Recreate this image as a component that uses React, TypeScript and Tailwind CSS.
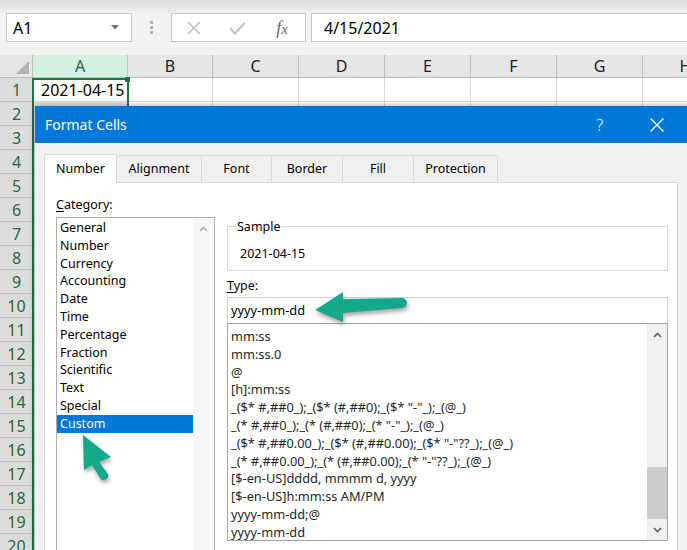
import React from 'react';

const categories = [
  'General',
  'Number',
  'Currency',
  'Accounting',
  'Date',
  'Time',
  'Percentage',
  'Fraction',
  'Scientific',
  'Text',
  'Special',
  'Custom',
];

const types = [
  'mm:ss',
  'mm:ss.0',
  '@',
  '[h]:mm:ss',
  '_($* #,##0_);_($* (#,##0);_($* "-"_);_(@_)',
  '_(* #,##0_);_(* (#,##0);_(* "-"_);_(@_)',
  '_($* #,##0.00_);_($* (#,##0.00);_($* "-"??_);_(@_)',
  '_(* #,##0.00_);_(* (#,##0.00);_(* "-"??_);_(@_)',
  '[$-en-US]dddd, mmmm d, yyyy',
  '[$-en-US]h:mm:ss AM/PM',
  'yyyy-mm-dd;@',
  'yyyy-mm-dd',
];

const columns = ['A', 'B', 'C', 'D', 'E', 'F', 'G', 'H'];
const rows = Array.from({ length: 20 }, (_, i) => i + 1);

const tabs = [
  { label: 'Alignment', w: 'w-[85px]' },
  { label: 'Font', w: 'w-[70px]' },
  { label: 'Border', w: 'w-[71px]' },
  { label: 'Fill', w: 'w-[71px]' },
  { label: 'Protection', w: 'w-[84px]' },
];

function Chevron({ up, color }: { up?: boolean; color: string }) {
  return (
    <svg width="9" height="6" viewBox="0 0 9 6">
      <polyline
        points={up ? '1,5 4.5,1.5 8,5' : '1,1 4.5,4.5 8,1'}
        fill="none"
        stroke={color}
        strokeWidth="1.6"
      />
    </svg>
  );
}

function Toolbar() {
  return (
    <div className="h-[55px] flex items-start pt-[13px] bg-[linear-gradient(to_bottom,#dcdcdc_0px,#eeeeee_12px,#f3f3f3_13px)]">
      {/* name box */}
      <div className="ml-[6px] w-[126px] h-[29px] bg-white border border-[#c6c6c6] flex items-center pl-[6px] pr-[12px]">
        <span className="text-[16px] text-black">A1</span>
        <svg className="ml-auto" width="8" height="5" viewBox="0 0 8 5">
          <polygon points="0,0 8,0 4,4.5" fill="#707070" />
        </svg>
      </div>
      <div className="w-[39px] h-[29px] flex flex-col items-center justify-center gap-[2px]">
        <span className="w-[3px] h-[3px] bg-[#b4b4b4]" />
        <span className="w-[3px] h-[3px] bg-[#b4b4b4]" />
        <span className="w-[3px] h-[3px] bg-[#b4b4b4]" />
      </div>
      {/* formula buttons */}
      <div className="w-[135px] h-[29px] bg-white border border-[#c6c6c6] flex items-center">
        <div className="w-[44px] flex justify-center">
          <svg width="14" height="14" viewBox="0 0 14 14">
            <path d="M1 1 L13 13 M13 1 L1 13" stroke="#c2c2c2" strokeWidth="1.6" />
          </svg>
        </div>
        <div className="w-[44px] flex justify-center">
          <svg width="17" height="14" viewBox="0 0 17 14">
            <polyline points="1,7 6,12.5 16,1.5" fill="none" stroke="#c2c2c2" strokeWidth="2" />
          </svg>
        </div>
        <div className="w-[46px] flex justify-center">
          <span className="font-['Liberation_Serif',serif] italic text-[18px] text-[#6b6b6b] leading-none">
            f<span className="text-[15px]">x</span>
          </span>
        </div>
      </div>
      <div className="ml-[5px] flex-1 h-[29px] bg-white border border-r-0 border-[#c6c6c6] flex items-center pl-[12px]">
        <span className="text-[16px] text-black">4/15/2021</span>
      </div>
    </div>
  );
}

function Sheet() {
  return (
    <div className="relative grid grid-cols-[33px_95px_85px_86px_86px_86px_86px_86px_86px]">
      {/* header row */}
      <div className="h-[23px] bg-[#e6e6e6] border-b border-r border-[#bdbdbd] relative">
        <svg className="absolute right-[3px] bottom-[3px]" width="13" height="13" viewBox="0 0 13 13">
          <polygon points="13,0 13,13 0,13" fill="#b3b3b3" />
        </svg>
      </div>
      {columns.map((c) => (
        <div
          key={c}
          className={`h-[23px] flex items-center justify-center text-[16px] border-b border-r ${
            c === 'A'
              ? 'bg-[#d3f0e0] text-[#1c6b3f] border-[#9fd5b7]'
              : 'bg-[#e6e6e6] text-[#222] border-[#bdbdbd]'
          }`}
        >
          {c}
        </div>
      ))}
      {rows.map((r) => (
        <React.Fragment key={r}>
          <div className="h-[24px] bg-[#dcdcdc] border-b border-[#bdbdbd] flex items-center justify-center text-[16px] text-[#1c6b3f]">
            {r}
          </div>
          {columns.map((c) => (
            <div
              key={c}
              className={`h-[24px] border-b border-r border-[#d9d9d9] ${
                c === 'A' && r > 1 ? 'bg-[#e0e0e0]' : 'bg-white'
              } ${c === 'A' && r === 1 ? 'pl-[8px] flex items-center text-[16px] text-black' : ''}`}
            >
              {c === 'A' && r === 1 ? '2021-04-15' : null}
            </div>
          ))}
        </React.Fragment>
      ))}
      {/* column A selection outline */}
      <div className="absolute left-[32px] top-[23px] w-[97px] h-[480px] border-2 border-[#217346] pointer-events-none" />
      <div className="absolute left-[125px] top-[22px] w-[5px] h-[5px] bg-[#217346]" />
    </div>
  );
}

function FormatCellsDialog() {
  return (
    <div className="absolute left-[35px] top-[106px] w-[660px] h-[460px] bg-[#f0f0f0] shadow-[0_0_6px_rgba(0,0,0,0.35)] flex flex-col">
      <div className="h-[37px] bg-[#0078d7] flex items-center pl-[10px] pr-[15px] text-white">
        <span className="text-[14px]">Format Cells</span>
        <div className="ml-auto w-[46px] flex justify-center text-[16px] font-light">?</div>
        <div className="ml-[11px] w-[46px] flex justify-center">
          <svg width="14" height="14" viewBox="0 0 14 14">
            <path d="M0.5 0.5 L13.5 13.5 M13.5 0.5 L0.5 13.5" stroke="white" strokeWidth="1.3" />
          </svg>
        </div>
      </div>

      <div className="pl-[9px] pt-[10px] flex-1 flex flex-col">
        <div className="flex items-end h-[29px]">
          <div className="w-[73px] h-[29px] bg-white border border-b-0 border-[#d9d9d9] -mb-px relative z-10 flex items-center justify-center text-[12.5px] text-black">
            Number
          </div>
          {tabs.map((t) => (
            <div
              key={t.label}
              className={`${t.w} h-[27px] border-t border-r border-[#dadada] flex items-center justify-center text-[12.5px] text-black`}
            >
              {t.label}
            </div>
          ))}
        </div>

        <div className="w-[634px] flex-1 bg-white border border-[#d9d9d9] flex">
          {/* category column */}
          <div className="pl-[11px] pt-[13px]">
            <div className="h-[17px] leading-[17px] text-[12.5px] text-black">
              <span className="underline underline-offset-2">C</span>ategory:
            </div>
            <div className="mt-[4px] w-[159px] h-[340px] border border-[#adadad] flex">
              <div className="flex-1 pt-[1px]">
                {categories.map((c) => (
                  <div
                    key={c}
                    className={`h-[17.8px] leading-[17.8px] pl-[3px] text-[12.5px] ${
                      c === 'Custom' ? 'bg-[#0078d7] text-white' : 'text-black'
                    }`}
                  >
                    {c}
                  </div>
                ))}
              </div>
              <div className="w-[21px] bg-[#f6f6f6] flex flex-col items-center">
                <div className="h-[21px] flex items-center">
                  <Chevron up color="#b0b0b0" />
                </div>
              </div>
            </div>
          </div>

          {/* type column */}
          <div className="ml-[12px] w-[441px] pt-[35px]">
            <fieldset className="border border-[#dcdcdc] px-[9px] pb-[8px]">
              <legend className="text-[12.5px] leading-[17px] text-black">Sample</legend>
              <div className="mt-[10px] pl-[3px] h-[17px] leading-[17px] text-[12.5px] text-black">
                2021-04-15
              </div>
            </fieldset>
            <div className="mt-[6px] h-[17px] leading-[17px] text-[12.5px] text-black">
              <span className="underline underline-offset-2">T</span>ype:
            </div>
            <div className="mt-[3px] h-[26px] border border-b-0 border-[#d0d0d0] flex items-center pl-[3px] text-[12.8px] text-black">
              yyyy-mm-dd
            </div>
            <div className="h-[218px] border border-[#a6a6a6] flex">
              <div className="flex-1 pt-[4px] overflow-hidden">
                {types.map((t, i) => (
                  <div key={i} className="h-[17.8px] leading-[17.8px] pl-[3px] text-[12.8px] text-[#262626] whitespace-nowrap">
                    {t}
                  </div>
                ))}
              </div>
              <div className="w-[20px] bg-[#f0f0f0] flex flex-col">
                <div className="h-[21px] flex items-center justify-center">
                  <Chevron up color="#606060" />
                </div>
                <div className="flex-1 flex flex-col justify-end">
                  <div className="h-[52px] bg-[#cdcdcd]" />
                </div>
                <div className="h-[21px] flex items-center justify-center">
                  <Chevron color="#606060" />
                </div>
              </div>
            </div>
          </div>
        </div>
      </div>
    </div>
  );
}

export default function App() {
  return (
    <div className="relative w-[687px] h-[550px] overflow-hidden bg-white font-['Noto_Sans',sans-serif]">
      <Toolbar />
      <Sheet />
      <FormatCellsDialog />

      {/* annotation: arrow pointing at the Type box */}
      <svg
        className="absolute left-[300px] top-[285px] drop-shadow-[1px_3px_2px_rgba(0,0,0,0.35)]"
        width="115"
        height="45"
        viewBox="0 0 115 45"
      >
        <path d="M15 25 L43 7 L43 14 L102 13 A5 5 0 0 1 102 23 L43 28 L43 37 Z" fill="#14a98b" />
      </svg>

      {/* annotation: cursor arrow pointing at Custom */}
      <svg
        className="absolute left-[75px] top-[428px] drop-shadow-[1px_3px_2px_rgba(0,0,0,0.35)]"
        width="45"
        height="60"
        viewBox="0 0 45 60"
      >
        <path
          d="M8 7 L36 29 L24 34 L32.8 45.7 A4.5 4.5 0 0 1 25.2 50.3 L17 37 L9 42 Z"
          fill="#14a98b"
        />
      </svg>
    </div>
  );
}
